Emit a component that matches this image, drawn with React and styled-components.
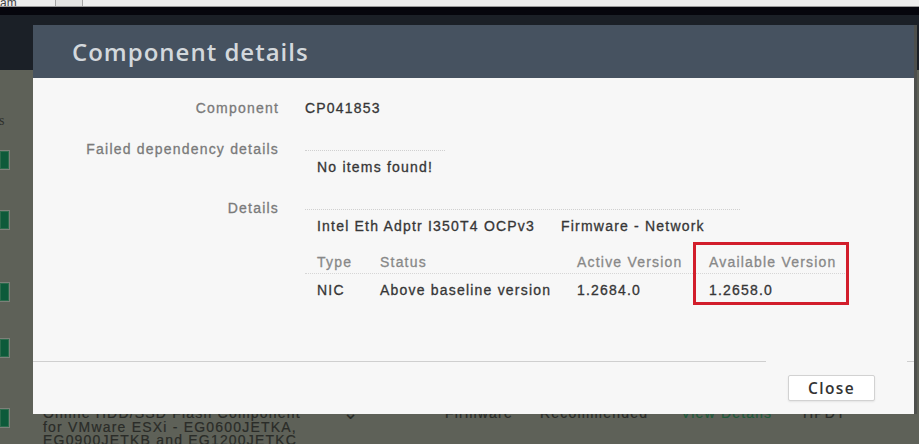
import React from "react"
import styled, { createGlobalStyle } from 'styled-components'

const GlobalStyle = createGlobalStyle`
    html, body {
        margin: 0;
        padding: 0;
        background: #5e6158;
    }
`

const Page = styled.div`
    position: relative;
    width: 919px;
    height: 444px;
    overflow: hidden;
    display: flex;
    flex-direction: column;
    font-family: "Liberation Sans", Arial, sans-serif;
`

const BrowserStrip = styled.div`
    height: 6px;
    flex: 0 0 6px;
    background: #ededed;
    border-bottom: 1px solid #9a9a9a;
    display: flex;
    align-items: flex-end;
    overflow: hidden;
`

const StripText = styled.span`
    font-size: 12px;
    line-height: 12px;
    color: #444;
    margin-bottom: -3px;
    width: 55px;
`

const StripBox = styled.div`
    width: 26px;
    height: 8px;
    margin-bottom: -3px;
    border: 1px solid #a5a5a5;
    background: #e2e2e2;
`

const NavBar = styled.div`
    flex: 0 0 63px;
    background: linear-gradient(#06060d 0 8px, #1b2027 8px);
`

const Content = styled.div`
    flex: 1;
    display: flex;
    background: #5e6158;
`

const Rail = styled.div`
    width: 33px;
    display: flex;
    flex-direction: column;
    overflow: hidden;
`

const RailLabel = styled.span`
    margin: 44px 0 0 -5px;
    font-family: "Liberation Serif", serif;
    font-size: 14px;
    line-height: 14px;
    color: #2e302c;
`

const Marker = styled.div`
    width: 11px;
    height: 20px;
    margin-top: ${p => p.mt}px;
    margin-left: -1px;
    border: 1px solid #7c8079;
    box-sizing: border-box;
    background: #0d5a3a;
    box-shadow: inset 0 0 0 1px #2c6b4c;
`

const Main = styled.div`
    flex: 1;
    padding: 337px 0 0 10px;
`

const BackRow = styled.div`
    display: grid;
    grid-template-columns: 300px 102px 95px 141px 122px auto;
    font-size: 14px;
    line-height: 13.5px;
    letter-spacing: 1.2px;
    color: #2a2c28;
    -webkit-text-stroke: 0.2px currentColor;
`

const BackCell = styled.span`
    padding-right: ${p => p.pr || 0}px;
    font-size: ${p => p.big ? '18px' : 'inherit'};
    color: ${p => p.green ? '#1f5a3b' : '#2a2c28'};
`

const Modal = styled.div`
    position: absolute;
    left: 33px;
    top: 25px;
    width: 881px;
    border-right: 3px solid #4d4f4c;
    display: flex;
    flex-direction: column;
    background: #f7f7f7;
`

const ModalHeader = styled.div`
    height: 53px;
    background: #465260;
    display: flex;
    align-items: center;
    padding-left: 39px;
`

const Title = styled.h2`
    margin: 0;
    font-family: "Open Sans", sans-serif;
    font-weight: 600;
    font-size: 24px;
    letter-spacing: 1px;
    color: #d3d8dc;
`

const ModalBody = styled.div`
    height: 283px;
    box-sizing: border-box;
    padding-top: 21px;
    display: flex;
    flex-direction: column;
    gap: 23px;
    font-size: 14px;
    line-height: 18px;
    letter-spacing: 1.2px;
    -webkit-text-stroke: 0.3px currentColor;
`

const Field = styled.div`
    display: grid;
    grid-template-columns: 246px 1fr;
    column-gap: 26px;
    align-items: start;
`

const Label = styled.div`
    text-align: right;
    color: #7a7a7a;
`

const Value = styled.div`
    color: #363636;
`

const ValueCol = styled.div`
    display: flex;
    flex-direction: column;
    align-items: flex-start;
`

const Section = styled.div`
    margin-top: 10px;
    padding: 7px ${p => p.pr}px 0 12px;
    border-top: 1px dotted #d0d0d0;
    display: flex;
    gap: 26px;
    color: #363636;
`

const Table = styled.div`
    position: relative;
    margin-top: 18px;
`

const TableRow = styled.div`
    display: grid;
    grid-template-columns: 63px 197px 132px auto;
    padding: ${p => p.head ? '0 12px 2px' : '7px 12px 0'};
    border-bottom: ${p => p.head ? '1px dotted #d6d6d6' : 'none'};
    color: ${p => p.head ? '#888' : '#363636'};
`

const Highlight = styled.div`
    position: absolute;
    left: 388px;
    top: -11px;
    width: 156px;
    height: 63px;
    box-sizing: border-box;
    border: 3px solid #d21e2b;
`

const Divider = styled.div`
    display: flex;
    height: 1px;
`

const Rule = styled.div`
    width: ${p => p.w}px;
    margin-left: ${p => p.ml || 0}px;
    background: #cfcfcf;
`

const Footer = styled.div`
    height: 52px;
    display: flex;
    align-items: center;
    justify-content: flex-end;
    padding-right: 39px;
`

const CloseButton = styled.button`
    width: 87px;
    height: 26px;
    padding: 0;
    background: #fff;
    border: 1px solid #d2d2d2;
    border-radius: 2px;
    box-shadow: 0 1px 2px rgba(0, 0, 0, 0.08);
    font-family: "Open Sans", sans-serif;
    font-weight: 600;
    font-size: 15.5px;
    letter-spacing: 1.4px;
    color: #333;
`

const markers = [22, 40, 52, 36, 50]

const App = () => {
    return (
        <Page>
            <GlobalStyle />
            <BrowserStrip>
                <StripText>am</StripText>
                <StripBox />
            </BrowserStrip>
            <NavBar />
            <Content>
                <Rail>
                    <RailLabel>ts</RailLabel>
                    {markers.map((m, i) => <Marker key={i} mt={m} />)}
                </Rail>
                <Main>
                    <BackRow>
                        <BackCell pr={32}>Online HDD/SSD Flash Component for VMware ESXi - EG0600JETKA, EG0900JETKB and EG1200JETKC</BackCell>
                        <BackCell big>⌄</BackCell>
                        <BackCell>Firmware</BackCell>
                        <BackCell>Recommended</BackCell>
                        <BackCell green>View Details</BackCell>
                        <BackCell>HPDT</BackCell>
                    </BackRow>
                </Main>
            </Content>

            <Modal>
                <ModalHeader>
                    <Title>Component details</Title>
                </ModalHeader>
                <ModalBody>
                    <Field>
                        <Label>Component</Label>
                        <Value>CP041853</Value>
                    </Field>
                    <Field>
                        <Label>Failed dependency details</Label>
                        <ValueCol>
                            <Section pr={12}>No items found!</Section>
                        </ValueCol>
                    </Field>
                    <Field>
                        <Label>Details</Label>
                        <ValueCol>
                            <Section pr={35}>
                                <span>Intel Eth Adptr I350T4 OCPv3</span>
                                <span>Firmware - Network</span>
                            </Section>
                            <Table>
                                <TableRow head>
                                    <span>Type</span>
                                    <span>Status</span>
                                    <span>Active Version</span>
                                    <span>Available Version</span>
                                </TableRow>
                                <TableRow>
                                    <span>NIC</span>
                                    <span>Above baseline version</span>
                                    <span>1.2684.0</span>
                                    <span>1.2658.0</span>
                                </TableRow>
                                <Highlight />
                            </Table>
                        </ValueCol>
                    </Field>
                </ModalBody>
                <Divider>
                    <Rule w={733} />
                    <Rule w={7} ml={141} />
                </Divider>
                <Footer>
                    <CloseButton>Close</CloseButton>
                </Footer>
            </Modal>
        </Page>
    )
}

export default App
